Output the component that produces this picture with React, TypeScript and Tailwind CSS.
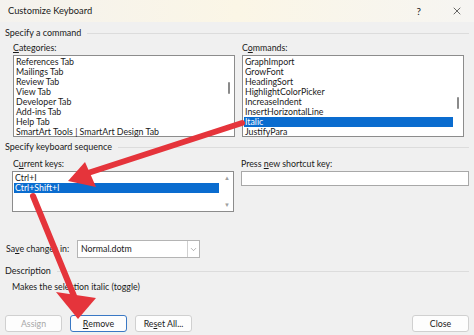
import { ChevronDown, X } from "lucide-react";

const font = { fontFamily: 'Lato, "Noto Sans", sans-serif' };

const categories = [
  "References Tab",
  "Mailings Tab",
  "Review Tab",
  "View Tab",
  "Developer Tab",
  "Add-ins Tab",
  "Help Tab",
  "SmartArt Tools | SmartArt Design Tab",
];

const commands = [
  "GraphImport",
  "GrowFont",
  "HeadingSort",
  "HighlightColorPicker",
  "IncreaseIndent",
  "InsertHorizontalLine",
  "Italic",
  "JustifyPara",
];

function GroupHeader({ label, className = "" }: { label: string; className?: string }) {
  return (
    <div className={"flex h-3 items-center gap-1.5 text-[9px] text-[#1a1a1a] " + className}>
      <span className="whitespace-nowrap">{label}</span>
      <div className="h-px flex-1 bg-[#dcdcdc]" />
    </div>
  );
}

function ListBox({ items, selected, thumbTop }: { items: string[]; selected?: string; thumbTop: number }) {
  return (
    <div className="relative h-[82px] border border-[#8c8c8c] bg-white pt-[1px] pr-[10px] pl-[1px]">
      {items.map((it) => (
        <div
          key={it}
          className={
            "h-[10px] whitespace-nowrap pl-[1px] text-[8.8px] leading-[10px] " +
            (it === selected ? "bg-[#0a6ccf] text-white" : "text-[#1a1a1a]")
          }
        >
          {it}
        </div>
      ))}
      <div className="absolute right-[4px] h-[12px] w-[2px] rounded bg-[#8a8a8a]" style={{ top: thumbTop }} />
    </div>
  );
}

function Btn({ children, focused, disabled }: { children: React.ReactNode; focused?: boolean; disabled?: boolean }) {
  return (
    <div
      className={
        "flex h-[17px] w-[57px] items-center justify-center rounded-[3px] bg-[#fdfdfd] text-[8.8px] " +
        (focused ? "border border-[#3a78c4] " : "border border-[#d0d0d0] ") +
        (disabled ? "text-[#a8a8a8]" : "text-[#1a1a1a]")
      }
    >
      {children}
    </div>
  );
}

export default function App() {
  return (
    <div className="relative h-[335px] w-[474px] overflow-hidden bg-[#f0f0f0]" style={font}>
      {/* title bar */}
      <div className="flex h-[22px] items-center bg-gradient-to-r from-[#f4f2ee] via-[#fbf6e6] to-[#f6f5f2] pl-2 text-[9.3px] text-[#1a1a1a]">
        <span>Customize Keyboard</span>
        <span className="ml-auto mr-[30px] text-[10px]">?</span>
        <X size={12} strokeWidth={1.3} className="mr-[11px]" />
      </div>

      <div className="px-[5px]">
        <GroupHeader label="Specify a command" className="mt-[5px]" />
        <div className="mt-[4px] grid grid-cols-[222px_222px] gap-x-[7px] pl-[8px]">
          <div>
            <div className="h-[10px] text-[8.8px] leading-[10px] text-[#1a1a1a]">
              <span className="underline">C</span>ategories:
            </div>
            <div className="mt-[2px]">
              <ListBox items={categories} thumbTop={26} />
            </div>
          </div>
          <div>
            <div className="h-[10px] text-[8.8px] leading-[10px] text-[#1a1a1a]">
              C<span className="underline">o</span>mmands:
            </div>
            <div className="mt-[2px]">
              <ListBox items={commands} selected="Italic" thumbTop={41} />
            </div>
          </div>
        </div>

        <GroupHeader label="Specify keyboard sequence" className="mt-[4px]" />
        <div className="mt-[6px] grid grid-cols-[222px_228px] gap-x-[7px] pl-[7px]">
          <div>
            <div className="h-[10px] pl-[1px] text-[8.8px] leading-[10px] text-[#1a1a1a]">
              C<span className="underline">u</span>rrent keys:
            </div>
            <div className="relative mt-[2px] h-[41px] border border-[#8c8c8c] bg-white pt-[1px] pr-[14px] pl-[1px]">
              <div className="h-[10px] pl-[1px] text-[8.8px] leading-[10px] text-[#1a1a1a]">Ctrl+I</div>
              <div className="h-[10px] bg-[#0a6ccf] pl-[1px] text-[8.8px] leading-[10px] text-white">Ctrl+Shift+I</div>
              <div className="absolute top-[3px] right-[3px] text-[6px] leading-none text-[#a0a0a0]">▲</div>
              <div className="absolute right-[3px] bottom-[3px] text-[6px] leading-none text-[#a0a0a0]">▼</div>
            </div>
          </div>
          <div>
            <div className="h-[10px] text-[8.8px] leading-[10px] text-[#1a1a1a]">
              Press <span className="underline">n</span>ew shortcut key:
            </div>
            <div className="mt-[2px] h-[15px] border border-[#a8a8a8] bg-white" />
          </div>
        </div>

        <div className="mt-[28px] flex h-[18px] items-center">
          <span className="w-[72px] whitespace-nowrap pl-[1px] text-[8.8px] text-[#1a1a1a]">
            Sa<span className="underline">v</span>e changes in:
          </span>
          <div className="flex h-[18px] w-[123px] items-center border border-[#b4b4b4] bg-white">
            <span className="flex-1 pl-[3px] text-[8.8px] text-[#1a1a1a]">Normal.dotm</span>
            <div className="flex h-full w-[12px] items-center justify-center border-l border-[#d0d0d0]">
              <ChevronDown size={9} strokeWidth={1.4} className="text-[#707070]" />
            </div>
          </div>
        </div>

        <GroupHeader label="Description" className="mt-[7px]" />
        <div className="mt-[4px] pl-[7px] text-[8.8px] leading-[12px] text-[#1a1a1a]">
          Makes the selection italic (toggle)
        </div>

        <div className="mt-[22px] flex gap-[8px]">
          <Btn disabled>Assign</Btn>
          <Btn focused>
            <span className="underline">R</span>emove
          </Btn>
          <Btn>
            Re<span className="underline">s</span>et All...
          </Btn>
          <div className="ml-auto">
            <Btn>Close</Btn>
          </div>
        </div>
      </div>

      {/* annotation arrows */}
      <svg className="pointer-events-none absolute inset-0" width="474" height="335" viewBox="0 0 474 335">
        <line x1="242" y1="123" x2="88" y2="173" stroke="#e5343b" strokeWidth="6" strokeLinecap="round" />
        <polygon points="68,181 85,162 96,187" fill="#e5343b" />
        <line x1="33" y1="196" x2="74" y2="296" stroke="#e5343b" strokeWidth="6" strokeLinecap="round" />
        <polygon points="78,319 56,292 96,298" fill="#e5343b" />
      </svg>
    </div>
  );
}
